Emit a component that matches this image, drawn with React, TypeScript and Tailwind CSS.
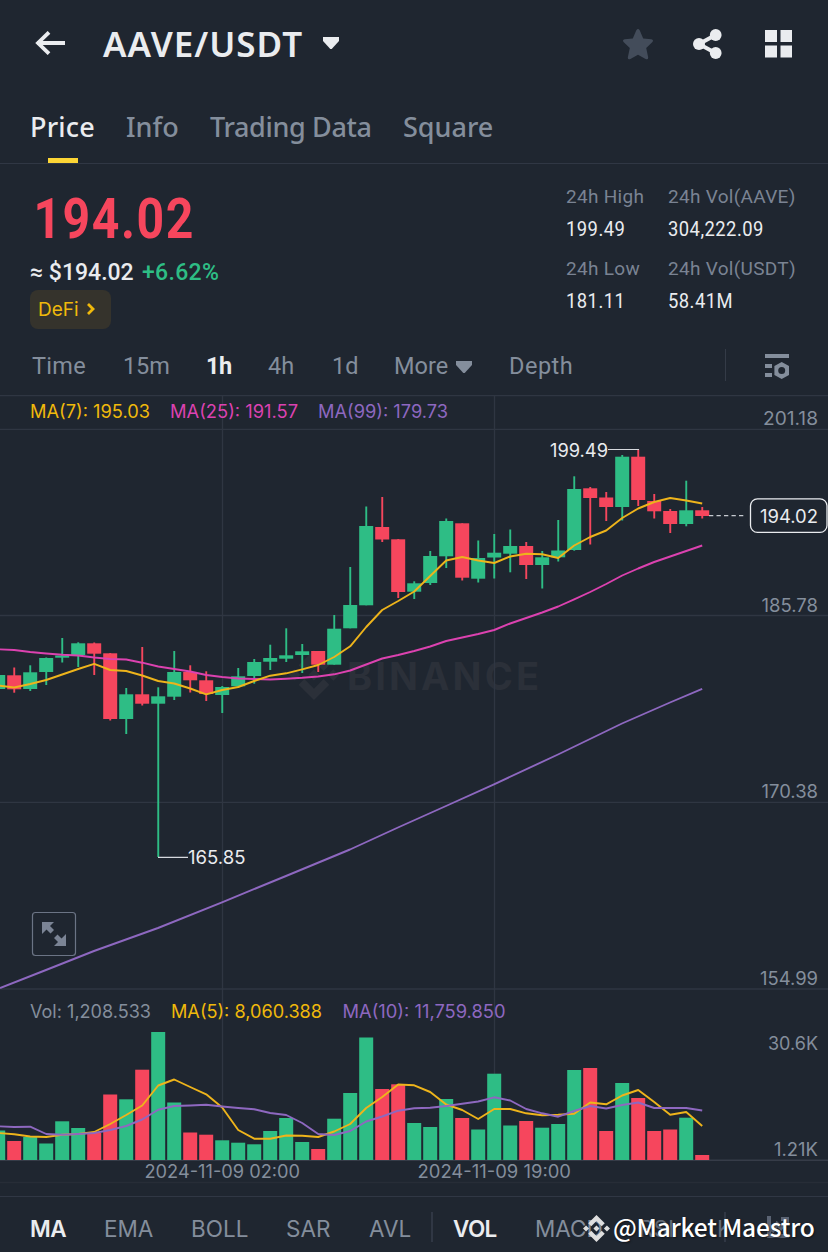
import React from "react";
import { SiBinance } from "react-icons/si";

const UP = "#2ebd85";
const DOWN = "#f6465d";

// wick top, body top, body bottom, wick bottom, volume top, rising
type Candle = [number, number, number, number, number, 0 | 1];

const candles: Candle[] = [
  [675, 675, 689, 689, 1130.5, 1],
  [667.5, 675.3, 689.3, 692.7, 1141, 0],
  [665.3, 672.3, 689, 691, 1137, 1],
  [657.5, 658, 672, 685, 1143.5, 1],
  [638, 655.5, 657.7, 662.5, 1121.3, 1],
  [642.3, 643.3, 655, 667, 1128, 1],
  [642.5, 643.3, 653.7, 675, 1133, 0],
  [653, 653.3, 719, 720.5, 1094.5, 0],
  [688, 694.3, 719, 734, 1099.3, 1],
  [647, 694.3, 703.7, 705.5, 1069.7, 0],
  [687.3, 696.3, 703.7, 857, 1032, 1],
  [651, 672, 696.7, 700, 1102.5, 1],
  [665.3, 672, 680.3, 692.5, 1132.5, 0],
  [671.3, 680.3, 694, 701, 1134.7, 0],
  [686, 687, 695, 713, 1140.3, 1],
  [668, 676.3, 686.3, 688, 1142.7, 1],
  [659, 662, 676, 683.7, 1144.3, 1],
  [644.7, 658, 661.7, 670, 1131, 1],
  [628.3, 655.3, 658.7, 662, 1118, 1],
  [644, 651.3, 655, 673, 1142, 1],
  [651, 651, 664.7, 672, 1149, 0],
  [615, 628.7, 664.7, 664.7, 1118.7, 1],
  [567, 605, 628.3, 628.3, 1093, 1],
  [506.5, 526, 605.3, 605.3, 1037.5, 1],
  [497, 527, 539.5, 542, 1089, 0],
  [539, 539.3, 592, 598, 1084.3, 0],
  [581.3, 583.3, 591.7, 599, 1123, 1],
  [551, 556, 583, 585, 1127, 1],
  [518.5, 521, 556.3, 568, 1099, 1],
  [523.3, 523.3, 577.7, 580.5, 1118, 0],
  [540.5, 558, 578.7, 582.5, 1129.5, 1],
  [534, 552.7, 557.5, 578.5, 1073.7, 1],
  [529.5, 546, 553.7, 572.3, 1125.5, 1],
  [542, 546, 565, 579, 1121, 0],
  [551, 557.3, 565, 588.5, 1127.7, 1],
  [520, 550.5, 557.3, 561.5, 1124, 1],
  [476.3, 489, 550, 550.7, 1070, 1],
  [487, 488.3, 498, 544.5, 1068, 0],
  [492, 497.5, 507, 521, 1131, 0],
  [455, 456.7, 507, 520.5, 1083, 1],
  [449.3, 456.7, 500, 506, 1098, 0],
  [494, 501, 511.3, 518.5, 1131, 0],
  [509, 511, 524, 533, 1129.5, 0],
  [480.7, 510.3, 524, 526.3, 1117.7, 1],
  [507, 510.3, 516, 518.5, 1155, 0],
];

const ma7 = [685.5, 687.5, 684, 680, 674.5, 669, 663.8, 670, 671, 675.5, 681, 683.5, 688.5, 694.3, 690, 687, 681, 675.7, 673.3, 669.3, 665, 657, 646.3, 627, 610, 601, 591.5, 576, 560.5, 557, 560.5, 563, 556.5, 553.8, 554.3, 558, 545.5, 537, 530.5, 518, 508.5, 502, 498, 500.5, 503.5];
const ma25 = [649.3, 650, 652, 653.5, 654.7, 655.5, 657.5, 659, 659.5, 662.7, 666.5, 669, 671.5, 675, 677, 678.5, 679, 679.5, 678.7, 677.8, 676.5, 674.3, 670.5, 664.5, 658.5, 655, 651, 646.5, 641, 637.5, 634, 630, 623.5, 618, 612.5, 606.5, 599.3, 592, 584, 575.5, 568.5, 562, 556.5, 551, 545.5];
const vol5 = [1133, 1134.3, 1136.5, 1137, 1134.7, 1134, 1132, 1124, 1115, 1105.5, 1085.5, 1079.5, 1087, 1094.3, 1107.5, 1130, 1138.7, 1138.7, 1135.5, 1135.7, 1137, 1131.5, 1124, 1108, 1097, 1084.5, 1085.3, 1092, 1104.5, 1110, 1119, 1109, 1109, 1113.3, 1115.3, 1114.7, 1113.7, 1102.5, 1104.3, 1095.5, 1090, 1102, 1114.7, 1112, 1126];
const vol10 = [1126.3, 1127, 1126.7, 1134, 1134.7, 1134, 1133, 1130, 1126, 1119.5, 1109.7, 1106, 1105.5, 1104.7, 1106.5, 1108, 1109.3, 1113, 1115, 1123, 1134, 1135, 1131, 1121.5, 1116.5, 1110.7, 1108.3, 1107.8, 1106, 1103.7, 1101.5, 1097.3, 1100.5, 1109, 1113.3, 1116.7, 1111, 1106, 1108.5, 1105, 1102.5, 1108, 1108, 1108, 1110.5];

const cx = (i: number) => 16 * i - 1.8;
const line = (ys: number[]) => ys.map((y, i) => `${cx(i)},${y}`).join(" ");

function Label({ x, y, w, fill = "#848e9c", size = 18, children }: { x: number; y: number; w: number; fill?: string; size?: number; children: string }) {
  return (
    <text x={x} y={y} fill={fill} fontSize={size} textLength={w} lengthAdjust="spacingAndGlyphs">
      {children}
    </text>
  );
}

function Chart() {
  return (
    <svg width="828" height="801" viewBox="0 395 828 801" className="block shrink-0 font-['Inter',sans-serif]">
      <g fill="#2b3039">
        <SiBinance x={289} y={650} size={50} color="#2b3039" />
        <text x="347" y="689.7" fontSize="38" fontWeight="700" textLength="192" lengthAdjust="spacing">BINANCE</text>
      </g>
      <g stroke="#2f3642" strokeWidth="1.3">
        <path d="M0 395.5H828M0 429.3H828M0 615.5H828M0 802.3H828M0 989H828M222.5 396V1160M494.5 396V1160" />
        <path d="M0 1182.5H828" stroke="#272d37" />
        <path d="M0 1160.3H828" strokeWidth="1.6" stroke="#363c48" />
      </g>
      {candles.map(([wt, bt, bb, wb, v, up], i) => (
        <g key={i} fill={up ? UP : DOWN}>
          <rect x={cx(i) - 0.9} y={wt} width="1.9" height={wb - wt} />
          <rect x={cx(i) - 7} y={bt} width="14" height={bb - bt} />
          <rect x={cx(i) - 7} y={v} width="14" height={1160 - v} />
        </g>
      ))}
      <g fill="none" strokeWidth="1.9" strokeLinejoin="round">
        <polyline points="0,988 46,970 94,951 158,928 222,902.3 286,876 350,849.5 398,827.5 446,806 494,784.3 558,754.5 622,723.5 670,702.5 702.2,688.8" stroke="#8e68c0" />
        <polyline points={line(ma25)} stroke="#dc42b0" />
        <polyline points={line(ma7)} stroke="#eeb41b" />
        <polyline points={line(vol5)} stroke="#eeb41b" />
        <polyline points={line(vol10)} stroke="#8e68c0" />
      </g>
      <Label x={30} y={418} w={120} fill="#f0b90b">MA(7): 195.03</Label>
      <Label x={170} y={418} w={128} fill="#dc42b0">MA(25): 191.57</Label>
      <Label x={318} y={418} w={130} fill="#8e68c0">MA(99): 179.73</Label>
      <Label x={763} y={425} w={55}>201.18</Label>
      <Label x={761.5} y={612} w={56.5}>185.78</Label>
      <Label x={761.5} y={798} w={56.5}>170.38</Label>
      <Label x={760} y={985} w={58}>154.99</Label>
      <Label x={30} y={1018} w={121}>Vol: 1,208.533</Label>
      <Label x={171} y={1018} w={151} fill="#f0b90b">MA(5): 8,060.388</Label>
      <Label x={342.5} y={1018} w={163} fill="#8e68c0">MA(10): 11,759.850</Label>
      <Label x={768} y={1050} w={50}>30.6K</Label>
      <Label x={774} y={1156} w={44}>1.21K</Label>
      <Label x={144.5} y={1178} w={155.5}>2024-11-09 02:00</Label>
      <Label x={417.5} y={1178} w={153.5}>2024-11-09 19:00</Label>
      <path d="M608 449.5H639M158 857.3H188" stroke="#d6d9de" strokeWidth="1.2" />
      <Label x={550} y={456.5} w={58} fill="#eaecef">199.49</Label>
      <Label x={188} y={864} w={57.5} fill="#eaecef">165.85</Label>
      <path d="M709 515.7H746" stroke="#c7cbd1" strokeWidth="1.2" strokeDasharray="4.3 3.2" />
      <rect x="750.5" y="498.8" width="76.5" height="33.6" rx="7" fill="#1f2630" stroke="#eaecef" strokeWidth="1.3" />
      <Label x={760} y={523.3} w={58} fill="#eaecef">194.02</Label>
      <rect x="32.5" y="912.5" width="43" height="43" rx="3" fill="#1f2630" stroke="#6b7485" strokeWidth="1.2" />
      <g fill="#7b8495">
        <path d="M42 922h12l-4 4 4 4-3.5 3.5-4-4-4.500 4.500z" />
        <path d="M66 946H54l4-4-4-4 3.500-3.500 4 4 4.500-4.500z" />
      </g>
    </svg>
  );
}

const Caret = ({ className }: { className: string }) => (
  <svg viewBox="0 0 16 12" className={className} fill="currentColor"><path d="M0 0h16v4L8.700 12H7.300L0 4z" /></svg>
);

function Stat({ label, value }: { label: string; value: string }) {
  return (
    <div className="h-[72px] whitespace-nowrap">
      <div className="h-8 text-[19px] leading-8 tracking-[0.3px] text-[#7a8393]">{label}</div>
      <div className="h-8 w-max origin-left scale-x-[0.92] text-[20px] leading-8 tracking-[0.5px] text-[#eaecef]">{value}</div>
    </div>
  );
}

export default function App() {
  return (
    <main className="relative flex h-[1252px] w-[828px] flex-col overflow-hidden bg-[#1f2630] font-['Roboto',sans-serif] text-[#eaecef]">
      <header className="flex h-[88px] shrink-0 items-center">
        <svg viewBox="0 0 30 24" className="-mt-0.5 ml-[35px] h-6 w-[30px] shrink-0" fill="none" stroke="currentColor" strokeWidth="3.8">
          <path d="M30 12H2M14 1.300L3 12l11 10.700" />
        </svg>
        <h1 className="ml-[38px] w-[220px] font-['Noto_Sans'] text-[35px] font-semibold tracking-[1px]">AAVE/USDT</h1>
        <Caret className="-mt-0.5 h-3 w-4" />
        <svg viewBox="0 0 30 31" className="ml-[284px] h-[31px] w-[30px]" fill="#434c5a">
          <path d="M13.200 1.400Q15-1.500 16.800 1.400L20.200 9.600l8.100.700Q31.200 11 29.200 13.200L23.200 19l2 9.400Q25.200 31.200 22.600 30L15 25.800l-7.600 4.200Q4.800 31.200 4.800 28.400L6.800 19 .800 13.200Q-1.200 11 1.700 10.300L9.800 9.600z" />
        </svg>
        <svg viewBox="0 0 29 30" className="ml-10 h-[30px] w-[29px]" fill="currentColor">
          <path d="M6 15L22.500 6M6 15l16.500 9" stroke="currentColor" strokeWidth="4" />
          <circle cx="6" cy="15" r="6" /><circle cx="22.700" cy="6" r="5.900" /><circle cx="22.700" cy="24" r="5.900" />
        </svg>
        <svg viewBox="0 0 27.500 27.500" className="ml-[42.500px] h-[27.500px] w-[27.500px]" fill="currentColor">
          <path d="M0 0h12v12H0zM15.500 0h12v12h-12zM0 15.500h12v12H0zM15.500 15.500h12v12h-12z" />
        </svg>
      </header>
      <nav className="flex h-[76px] shrink-0 items-start whitespace-nowrap border-b border-[#303744] pl-[30px] font-['Noto_Sans'] text-[27px] font-medium leading-[78px] text-[#848e9c]">
        <div className="relative h-[75px] w-24 tracking-[0.2px] text-[#eaecef]">Price<span className="absolute bottom-0 left-[18px] h-[5px] w-[30px] bg-[#fcd535]" /></div>
        <div className="w-[84px]">Info</div>
        <div className="w-[193px] tracking-[-0.35px]">Trading Data</div>
        <div>Square</div>
      </nav>
      <section className="flex h-[174px] shrink-0">
        <div className="w-[565px] pl-[30px]">
          <div className="mt-[23px] h-[64px] w-max origin-left scale-x-[0.86] pl-1 text-[56px] font-bold leading-[64px] tracking-[1.8px] text-[#f6465d]">194.02</div>
          <div className="mt-1.5 flex h-8 items-center whitespace-nowrap text-[23px] font-medium"><span className="w-[112px]">≈ $194.02</span><span className="tracking-[0.3px] text-[#2ebd85]">+6.62%</span></div>
          <div className="mt-px flex h-[39px] w-[81px] items-center rounded-lg bg-[#35332c] pl-2 pt-0.5 text-[19px] text-[#f0b90b]">
            <span className="w-[49px] font-['Inter']">DeFi</span>
            <svg viewBox="0 0 8 12" className="-mt-1 h-3 w-2" fill="none" stroke="currentColor" strokeWidth="2.800"><path d="M1 1l5 5-5 5" /></svg>
          </div>
        </div>
        <div className="w-[103px] pl-px pt-[17px]">
          <Stat label="24h High" value="199.49" />
          <Stat label="24h Low" value="181.11" />
        </div>
        <div className="pt-[17px]">
          <Stat label="24h Vol(AAVE)" value="304,222.09" />
          <Stat label="24h Vol(USDT)" value="58.41M" />
        </div>
      </section>
      <nav className="flex h-[57px] shrink-0 items-center whitespace-nowrap pl-8 text-[23.500px] text-[#848e9c]">
        <span className="w-[91px] tracking-[0.3px]">Time</span>
        <span className="w-[83px] tracking-[-0.1px]">15m</span>
        <span className="w-[62px] font-bold tracking-[-0.6px] text-[#eaecef]">1h</span>
        <span className="w-16">4h</span>
        <span className="w-[62px]">1d</span>
        <span className="w-[62px]">More</span>
        <Caret className="h-3 w-4" />
        <span className="ml-[37px] w-[216px] tracking-[0.5px]">Depth</span>
        <span className="-mt-1 h-8 w-px bg-[#343b47]" />
        <svg viewBox="0 0 24 25" className="ml-[39px] h-[25px] w-6" fill="currentColor">
          <path d="M0 0h24v4H0zM0 10h7v4H0zM0 19h7v4H0z" />
          <path fillRule="evenodd" d="M16.700 8L24 12v9l-7.300 4-7.300-4v-9zM16.700 13a3.500 3.500 0 1 0 0 7 3.500 3.500 0 0 0 0-7z" />
        </svg>
      </nav>
      <Chart />
      <footer className="flex h-[56px] shrink-0 items-center whitespace-nowrap border-t border-[#303744] pl-[30px] pt-2 font-['Inter'] text-[22.500px] text-[#848e9c]">
        <span className="w-[74px] font-semibold tracking-[-0.6px] text-[#eaecef]">MA</span>
        <span className="w-[87px] shrink-0">EMA</span>
        <span className="w-[95px] shrink-0">BOLL</span>
        <span className="w-[83px] shrink-0">SAR</span>
        <span className="w-[62px] shrink-0">AVL</span>
        <span className="-mt-1 mr-5 h-[30px] w-0.5 shrink-0 bg-[#303744]" />
        <span className="w-[82px] shrink-0 font-semibold tracking-[-0.6px] text-[#eaecef]">VOL</span>
        <span className="w-[104px] shrink-0">MACD</span>
        <span className="w-[78px] shrink-0 text-[#626b79]">RSI</span>
        <span className="w-[7px] shrink-0 overflow-hidden text-[#626b79]">K</span>
        <span className="-mt-1 mr-[41px] h-[30px] w-0.5 shrink-0 bg-[#303744]" />
        <svg viewBox="0 0 22 22" className="-mt-1 h-[22px] w-[22px] shrink-0" fill="none" stroke="#5a6373" strokeWidth="4">
          <path d="M2 0v20h20M5 16l5-8 4 4 6-8M14 3h6v6" />
        </svg>
      </footer>
      <div className="absolute left-[583px] top-[1208px] flex h-10 items-center whitespace-nowrap text-white [text-shadow:1px_1px_2px_#0008]">
        <SiBinance className="h-[27px] w-[27px] text-[#dedede]" />
        <span className="-mt-0.5 ml-[3px] font-['Noto_Sans_CJK_SC',sans-serif] text-[24.500px] font-medium tracking-[-0.2px]">@Market Maestro</span>
      </div>
    </main>
  );
}
